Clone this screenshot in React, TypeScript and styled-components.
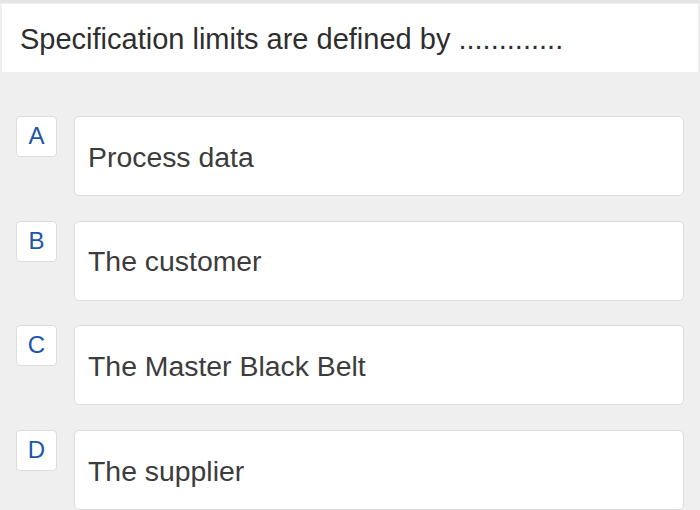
import React from "react";
import styled, { createGlobalStyle } from "styled-components";

const Global = createGlobalStyle`
  html, body { margin: 0; padding: 0; background: #efefef; }
  body { font-family: "Liberation Sans", Arial, sans-serif; }
`;

const Page = styled.div`
  width: 700px;
  height: 510px;
  overflow: hidden;
  background: #efefef;
  border-top: 3px solid #e4e4e4;
  box-sizing: border-box;
`;

const Header = styled.div`
  margin: 1px 2px 0;
  height: 68px;
  background: #ffffff;
  display: flex;
  align-items: center;
  padding: 2px 0 0 18px;
  box-sizing: border-box;
  font-size: 29px;
  color: #2e2e2e;
`;

const List = styled.div`
  display: flex;
  flex-direction: column;
  gap: 24.7px;
  padding: 44px 0 0 16px;
`;

const Row = styled.div`
  display: flex;
  align-items: flex-start;
  gap: 17px;
`;

const Letter = styled.div`
  width: 41px;
  height: 41px;
  box-sizing: border-box;
  border: 1px solid #dcdcdc;
  border-radius: 4px;
  background: #ffffff;
  display: flex;
  align-items: center;
  justify-content: center;
  color: #1d56a6;
  font-size: 24px;
  padding-bottom: 1px;
`;

const Card = styled.div`
  width: 610px;
  height: 80px;
  box-sizing: border-box;
  border: 1px solid #dcdcdc;
  border-radius: 5px;
  background: #ffffff;
  display: flex;
  align-items: center;
  padding: 2px 0 0 13px;
  font-size: 28.4px;
  color: #3c3c3c;
`;

const options = [
  { letter: "A", text: "Process data" },
  { letter: "B", text: "The customer" },
  { letter: "C", text: "The Master Black Belt" },
  { letter: "D", text: "The supplier" },
];

export default function App() {
  return (
    <>
      <Global />
      <Page>
        <Header>Specification limits are defined by .............</Header>
        <List>
          {options.map((o) => (
            <Row key={o.letter}>
              <Letter>{o.letter}</Letter>
              <Card>{o.text}</Card>
            </Row>
          ))}
        </List>
      </Page>
    </>
  );
}
